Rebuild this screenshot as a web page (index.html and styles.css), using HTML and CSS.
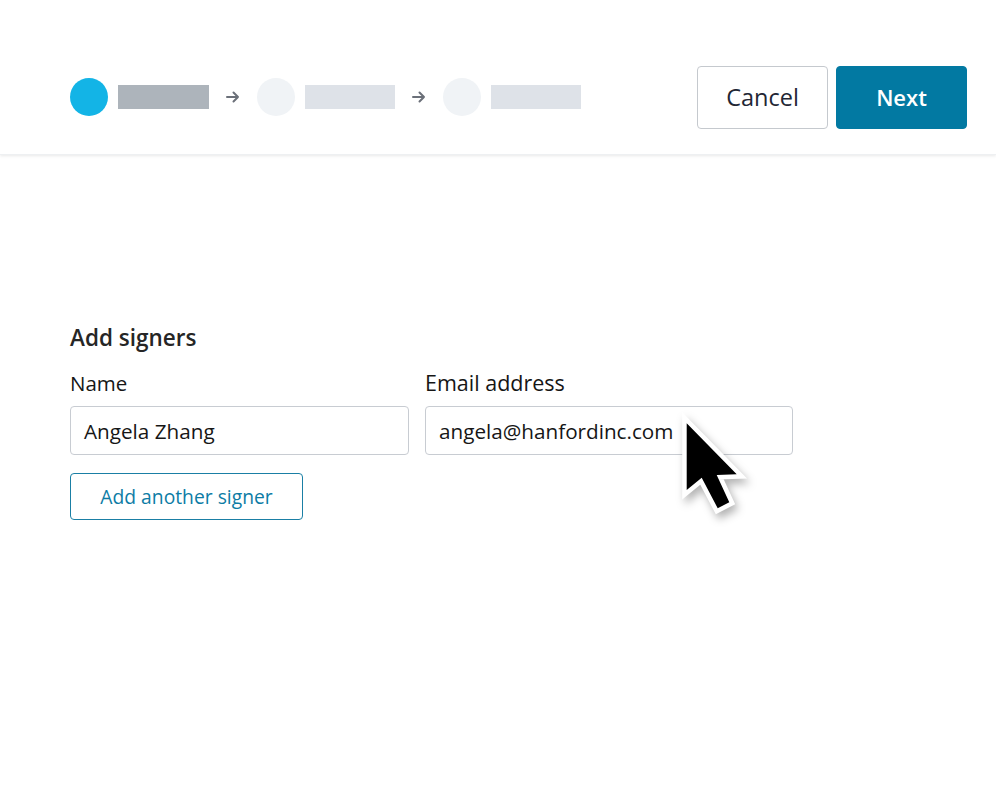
FILE: index.html
```html
<!DOCTYPE html>
<html lang="en">
<head>
<meta charset="utf-8">
<title>Add signers</title>
<link rel="stylesheet" href="styles.css">
</head>
<body>
<div class="page">
  <header class="topbar">
    <div class="steps">
      <span class="dot dot-active"></span>
      <span class="bar bar-active"></span>
      <svg class="arrow" viewBox="0 0 16 16" width="16" height="16"><path d="M2 8h11M8.5 3.5 13 8l-4.5 4.5" fill="none" stroke="#6b7079" stroke-width="2" stroke-linecap="round" stroke-linejoin="round"/></svg>
      <span class="dot"></span>
      <span class="bar"></span>
      <svg class="arrow" viewBox="0 0 16 16" width="16" height="16"><path d="M2 8h11M8.5 3.5 13 8l-4.5 4.5" fill="none" stroke="#6b7079" stroke-width="2" stroke-linecap="round" stroke-linejoin="round"/></svg>
      <span class="dot"></span>
      <span class="bar"></span>
    </div>
    <div class="actions">
      <button class="btn btn-cancel">Cancel</button>
      <button class="btn btn-next">Next</button>
    </div>
  </header>

  <main class="content">
    <h2 class="title">Add signers</h2>
    <div class="fields">
      <label class="label label-name">Name</label>
      <label class="label label-email">Email address</label>
      <div class="input">Angela Zhang</div>
      <div class="input">angela@hanfordinc.com</div>
    </div>
    <button class="btn-add">Add another signer</button>
  </main>

  <svg class="cursor" viewBox="0 0 90 125" width="90" height="125">
    <polygon points="16.7,18.3 16.7,85 31.7,72.7 47.7,103.3 59.3,97.3 46.7,70 66.7,69.3" fill="#000" stroke="#fff" stroke-width="9" stroke-linejoin="miter" paint-order="stroke"/>
  </svg>
</div>
</body>
</html>
```

FILE: styles.css
```css
* { box-sizing: border-box; }
html, body { margin: 0; padding: 0; background: #fff; }
body { font-family: "Open Sans", "Noto Sans", Arial, sans-serif; color: #1e1e1e; }

.page { position: relative; width: 996px; height: 808px; overflow: hidden; }

.topbar {
  height: 155px;
  display: flex;
  justify-content: space-between;
  align-items: center;
  padding: 66px 29px 26px 70px;
  box-shadow: 0 1px 3px rgba(0,0,0,0.09);
  border-bottom: 1px solid #eef0f2;
}

.steps { display: flex; align-items: center; }
.dot { width: 38px; height: 38px; border-radius: 50%; background: #f0f3f6; }
.dot-active { background: #13b4e6; }
.bar { width: 90px; height: 24px; margin-left: 10px; background: #dee2e8; }
.bar-active { background: #adb4bb; width: 91px; }
.arrow { margin: 0 16px; display: block; }

.actions { display: flex; gap: 8px; }
.btn {
  height: 63px;
  width: 131px;
  border-radius: 4px;
  font-family: inherit;
  cursor: pointer;
}
.btn-cancel { background: #fff; border: 1px solid #c5c9ce; color: #222634; font-size: 23.5px; }
.btn-next { background: #0279a2; border: 1px solid #0279a2; color: #fff; font-weight: 600; font-size: 22px; }

.content { padding: 168px 0 0 70px; }
.title { margin: 0; font-size: 22.5px; line-height: 30px; font-weight: 600; color: #262626; }

.fields {
  margin-top: 17px;
  display: grid;
  grid-template-columns: 339px 368px;
  column-gap: 16px;
  row-gap: 10px;
  align-items: baseline;
}
.label { line-height: 26px; color: #161616; }
.label-name { font-size: 20.5px; }
.label-email { font-size: 21.5px; }

.input {
  height: 49px;
  border: 1px solid #c8ccd2;
  border-radius: 4px;
  padding: 0 13px;
  display: flex;
  align-items: center;
  font-size: 20.7px;
  color: #161616;
}

.btn-add {
  margin-top: 18px;
  width: 233px;
  height: 47px;
  border: 1px solid #1a7fa5;
  border-radius: 4px;
  background: #fff;
  color: #0d7ca5;
  font-family: inherit;
  font-size: 19.3px;
  cursor: pointer;
}

.cursor {
  position: absolute;
  left: 670px;
  top: 405px;
  filter: drop-shadow(3px 5px 4px rgba(0,0,0,0.3));
}
```
